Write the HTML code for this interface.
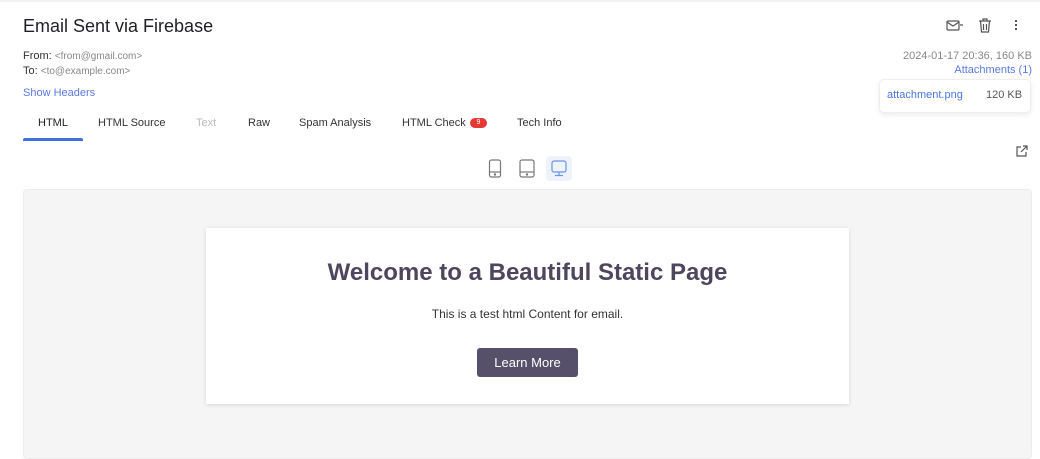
<!DOCTYPE html>
<html><head><style>
*{margin:0;padding:0;box-sizing:border-box}
body{width:1040px;height:452px;overflow:hidden;background:#fff;font-family:"Liberation Sans",sans-serif;position:relative;color:#222}
.a{position:absolute;white-space:nowrap}
</style></head><body>
<div class="a" style="left:0;top:0;width:1040px;height:2px;background:#f2f2f4"></div>
<div class="a" style="left:23px;top:16px;font-size:18px;color:#1f1f24">Email Sent via Firebase</div>
<div class="a" style="left:23px;top:50px;font-size:11px;color:#333">From: <span style="color:#888;font-size:10px">&lt;from@gmail.com&gt;</span></div>
<div class="a" style="left:23px;top:65px;font-size:11px;color:#333">To: <span style="color:#888;font-size:10px">&lt;to@example.com&gt;</span></div>
<div class="a" style="left:23px;top:87px;font-size:11px;color:#5a7be0">Show Headers</div>
<div class="a" style="left:38px;top:117px;font-size:11px;color:#222">HTML</div>
<div class="a" style="left:23px;top:138px;width:60px;height:3px;background:#3d73e0;border-radius:2px 2px 0 0"></div>
<div class="a" style="left:98px;top:117px;font-size:11px;color:#333">HTML Source</div>
<div class="a" style="left:196px;top:117px;font-size:11px;color:#bbb">Text</div>
<div class="a" style="left:248px;top:117px;font-size:11px;color:#333">Raw</div>
<div class="a" style="left:299px;top:117px;font-size:11px;color:#333">Spam Analysis</div>
<div class="a" style="left:402px;top:117px;font-size:11px;color:#333">HTML Check</div>
<div class="a" style="left:470px;top:118px;width:17px;height:10px;background:#e53935;border-radius:5px;color:#fff;font-size:7px;text-align:center;line-height:10px">9</div>
<div class="a" style="left:517px;top:117px;font-size:11px;color:#333">Tech Info</div>
<svg class="a" style="left:946px;top:19px" width="18" height="14" viewBox="0 0 18 14" fill="none" stroke="#555" stroke-width="1.2"><rect x="1" y="2" width="12" height="9" rx="1"/><path d="M1 3l6 4 6-4M14 6h3"/></svg>
<svg class="a" style="left:978px;top:18px" width="14" height="15" viewBox="0 0 14 15" fill="none" stroke="#555" stroke-width="1.2"><path d="M1 3h12M5 3V1h4v2M2.5 3l1 11h7l1-11M5.5 6v6M8.5 6v6"/></svg>
<div class="a" style="left:1015px;top:20px;width:2px;height:2px;background:#555;box-shadow:0 4px #555,0 8px #555"></div>
<div class="a" style="right:8px;top:50px;font-size:11px;color:#888">2024-01-17 20:36, 160 KB</div>
<div class="a" style="right:8px;top:64px;font-size:11px;color:#5a7be0">Attachments (1)</div>
<div class="a" style="left:879px;top:79px;width:152px;height:34px;background:#fff;border:1px solid #eee;border-radius:5px;box-shadow:0 2px 6px rgba(0,0,0,.08)"></div>
<div class="a" style="left:887px;top:89px;font-size:11px;color:#4a77dd">attachment.png</div>
<div class="a" style="left:986px;top:89px;font-size:11px;color:#555">120 KB</div>
<svg class="a" style="left:1015px;top:145px" width="13" height="13" viewBox="0 0 13 13" fill="none" stroke="#555" stroke-width="1.2"><path d="M6 2H2v9h9V7M8 1h4v4M12 1L6 7"/></svg>
<svg class="a" style="left:488px;top:159px" width="14" height="19" viewBox="0 0 14 19" fill="none" stroke="#777" stroke-width="1.2"><rect x="1.5" y="1" width="11" height="17" rx="2"/><path d="M1.5 13h11"/><circle cx="7" cy="15.5" r=".6"/></svg>
<svg class="a" style="left:519px;top:159px" width="16" height="19" viewBox="0 0 16 19" fill="none" stroke="#777" stroke-width="1.2"><rect x="1" y="1" width="14" height="17" rx="2"/><path d="M1 13h14"/><circle cx="8" cy="15.5" r=".6"/></svg>
<div class="a" style="left:546px;top:156px;width:26px;height:25px;background:#eef3fb;border-radius:4px"></div>
<svg class="a" style="left:551px;top:160px" width="16" height="17" viewBox="0 0 16 17" fill="none" stroke="#6b93e6" stroke-width="1.2"><rect x="1" y="1" width="14" height="11" rx="2"/><path d="M8 12v3M4 15.5h8"/></svg>
<div class="a" style="left:23px;top:189px;width:1009px;height:270px;background:#f5f5f5;border:1px solid #ececec;border-radius:4px"></div>
<div class="a" style="left:206px;top:228px;width:643px;height:176px;background:#fff;box-shadow:0 1px 4px rgba(0,0,0,.12)"></div>
<div class="a" style="left:206px;top:259px;width:643px;text-align:center;font-size:24px;font-weight:bold;color:#4e465c">Welcome to a Beautiful Static Page</div>
<div class="a" style="left:206px;top:307px;width:643px;text-align:center;font-size:12px;color:#333">This is a test html Content for email.</div>
<div class="a" style="left:477px;top:348px;width:101px;height:29px;background:#56506a;border-radius:3px;color:#fff;font-size:13px;text-align:center;line-height:29px">Learn More</div>
</body></html>
